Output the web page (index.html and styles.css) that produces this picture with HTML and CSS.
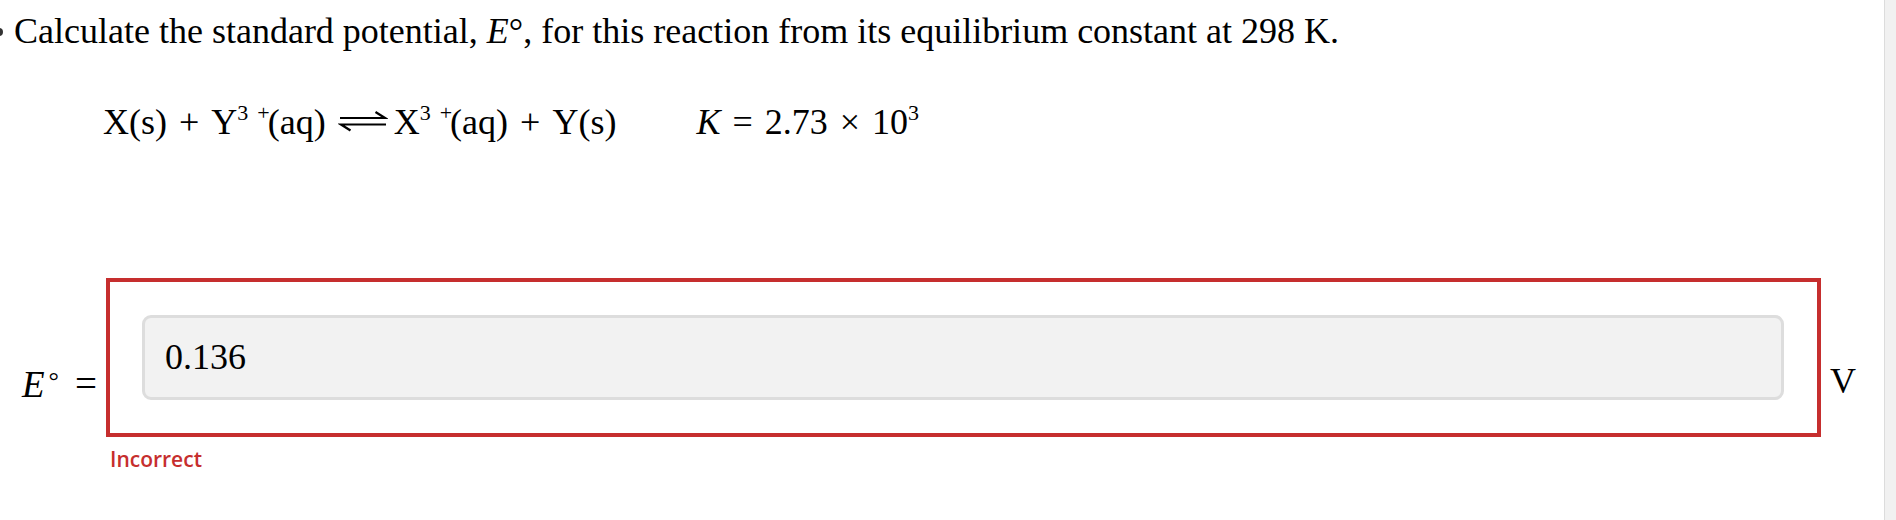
FILE: index.html
```html
<!DOCTYPE html>
<html lang="en">
<head>
<meta charset="utf-8">
<title>Standard potential</title>
<link rel="stylesheet" href="styles.css">
</head>
<body>
<div class="page">
  <main class="content">
    <p class="prompt"><span class="dot"></span>Calculate the standard potential, <i class="sym">E</i>°, for this reaction from its equilibrium constant at 298 K.</p>
    <div class="equation">
      <span class="reaction">X(s)<span class="op">+</span>Y<sup class="sup">3<span class="charge">+</span></sup><span class="tight">(aq)</span><svg class="eq-arrow" width="50" height="22" viewBox="0 0 50 22" aria-hidden="true"><path d="M2 8H47L37.5 2" fill="none" stroke="#000" stroke-width="2.2"/><path d="M48 14.5H3L12.5 20.5" fill="none" stroke="#000" stroke-width="2.2"/></svg>X<sup class="sup">3<span class="charge">+</span></sup><span class="tight">(aq)</span><span class="op">+</span>Y(s)</span>
      <span class="constant"><i class="sym">K</i><span class="op">=</span>2.73<span class="op">×</span>10<sup class="sup">3</sup></span>
    </div>
    <div class="answer-row">
      <span class="label"><i class="sym">E</i><span class="deg">°</span><span class="equals">=</span></span>
      <div class="answer-col">
        <div class="answer-box">
          <div class="answer-input">0.136</div>
        </div>
        <div class="feedback">Incorrect</div>
      </div>
      <span class="unit">V</span>
    </div>
  </main>
  <div class="scrollbar"></div>
</div>
</body>
</html>
```

FILE: styles.css
```css
html, body {
  margin: 0;
  padding: 0;
  background: #ffffff;
}

body {
  font-family: "Liberation Serif", "Times New Roman", serif;
  color: #000000;
  overflow: hidden;
}

.page {
  display: flex;
  width: 1896px;
  height: 520px;
}

.content {
  flex: 1;
  padding-top: 11px;
  min-width: 0;
}

.scrollbar {
  width: 11px;
  border-left: 1px solid #dcdcdc;
  background: #f1f1f1;
}

.prompt {
  margin: 0;
  font-size: 36px;
  line-height: 40px;
  padding-left: 14px;
  white-space: nowrap;
}

.dot {
  display: inline-block;
  width: 8px;
  height: 8px;
  border-radius: 50%;
  background: #333333;
  margin-left: -19px;
  margin-right: 11px;
  vertical-align: 7px;
}

.sym {
  font-style: italic;
}

.equation {
  margin-top: 51px;
  padding-left: 103px;
  font-size: 36px;
  line-height: 40px;
  display: flex;
  gap: 80px;
  white-space: nowrap;
}

.op {
  padding: 0 12px;
}

.sup {
  font-size: 22px;
  line-height: 0;
  vertical-align: 14px;
}

.charge {
  margin-left: 9px;
}

.tight {
  margin-left: -2px;
}

.eq-arrow {
  margin: 0 6px 0 12px;
  vertical-align: 2px;
}

.answer-row {
  margin-top: 136px;
  display: flex;
  align-items: flex-start;
  padding-left: 22px;
  padding-right: 28px;
}

.label {
  width: 84px;
  margin-top: 83px;
  font-size: 37px;
  line-height: 40px;
  white-space: nowrap;
}

.deg {
  font-size: 26px;
  vertical-align: 8px;
  margin-left: 4px;
}

.equals {
  margin-left: 16px;
  font-size: 39px;
}

.answer-col {
  flex: 1;
}

.answer-box {
  border: 4px solid #c62e2e;
  padding: 33px 33px 33px 32px;
}

.answer-input {
  height: 79px;
  border: 3px solid #dddddd;
  border-radius: 9px;
  background: #f2f2f2;
  padding-left: 20px;
  font-size: 36px;
  line-height: 79px;
  box-sizing: content-box;
}

.feedback {
  margin-top: 8px;
  padding-left: 4px;
  font-family: "Open Sans", sans-serif;
  font-weight: 600;
  font-size: 21px;
  line-height: 28px;
  color: #c62e2e;
}

.unit {
  margin-top: 83px;
  margin-left: 9px;
  font-size: 36px;
  line-height: 40px;
}
```
